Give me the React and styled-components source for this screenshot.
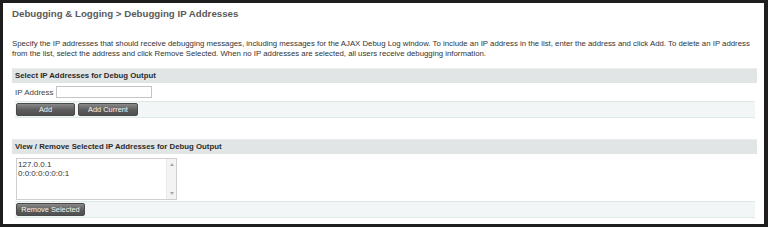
import React from 'react';
import styled, { createGlobalStyle } from 'styled-components';

const GlobalStyle = createGlobalStyle`
	html, body {
		margin: 0;
		padding: 0;
		background: #ffffff;
	}
	body {
		font-family: 'Liberation Sans', Arial, sans-serif;
		color: #333;
	}
`;

const Frame = styled.div`
	width: 768px;
	height: 227px;
	box-sizing: border-box;
	border: 3px solid #1e1e1e;
	border-right-width: 4px;
	padding: 4px 9px 0 9px;
	overflow: hidden;
	background: #fff;
`;

const Title = styled.h1`
	margin: 0;
	font-size: 9.7px;
	font-weight: bold;
	color: #5a5a5a;
	line-height: 14px;
`;

const Intro = styled.p`
	margin: 18px -6px 0 0;
	font-size: 7.8px;
	line-height: 10px;
	color: #333;
`;

const Section = styled.div`
	margin-top: ${({ gap }) => gap}px;
	width: 745px;
`;

const SectionHead = styled.div`
	height: 15px;
	background: #e1e5e5;
	border-top: 1px solid #e8eded;
	box-sizing: border-box;
	padding-left: 3px;
	font-size: 7.8px;
	font-weight: bold;
	line-height: 14px;
	color: #2b2b2b;
`;

const Body = styled.div`
	padding-left: 3px;
	width: 740px;
`;

const FieldRow = styled.div`
	display: flex;
	align-items: center;
	gap: 2px;
	height: 18px;
	font-size: 8px;
	color: #444;
`;

const TextInput = styled.input`
	width: 96px;
	height: 12px;
	box-sizing: border-box;
	border: 1px solid #c4c4c4;
	padding: 0 2px;
	font-size: 8px;
	outline: none;
`;

const ButtonBar = styled.div`
	display: flex;
	align-items: center;
	gap: 3px;
	height: 17px;
	box-sizing: border-box;
	background: #f2f6f6;
	border-top: 1px solid #dce9e9;
	border-bottom: 1px solid #dce9e9;
	padding-left: 1px;
`;

const Button = styled.button`
	width: ${({ w }) => w}px;
	height: 13px;
	padding: 0;
	border: 1px solid #4a4a4a;
	border-radius: 2px;
	background: linear-gradient(#8a8a8a, #5b5b5b 55%, #505050);
	color: #f4f4f4;
	font-family: 'Liberation Sans', Arial, sans-serif;
	font-size: 7.4px;
	line-height: 11px;
	text-align: center;
	cursor: pointer;
`;

const ListWrap = styled.div`
	display: flex;
	margin: 4px 0 1px 1px;
	width: 161px;
	height: 42px;
	box-sizing: border-box;
	border: 1px solid #cfcfcf;
	background: #fff;
`;

const ListItems = styled.div`
	flex: 1;
	padding: 1px 0 0 1px;
	font-size: 8px;
	line-height: 9px;
	color: #333;
`;

const Scrollbar = styled.div`
	width: 10px;
	display: flex;
	flex-direction: column;
	justify-content: space-between;
	align-items: center;
	background: #f3f3f3;
	border-left: 1px solid #ececec;
	padding: 4px 0;
	box-sizing: border-box;
`;

const Arrow = styled.div`
	width: 0;
	height: 0;
	border-left: 2.5px solid transparent;
	border-right: 2.5px solid transparent;
	${({ up }) =>
		up
			? 'border-bottom: 3px solid #a8a8a8;'
			: 'border-top: 3px solid #a8a8a8;'}
`;

const App = () => {
	return (
		<>
			<GlobalStyle />
			<Frame>
				<Title>Debugging &amp; Logging &gt; Debugging IP Addresses</Title>
				<Intro>
					Specify the IP addresses that should receive debugging messages, including messages for the AJAX Debug Log
					window. To include an IP address in the list, enter the address and click Add. To delete an IP address from the
					list, select the address and click Remove Selected. When no IP addresses are selected, all users receive
					debugging information.
				</Intro>

				<Section gap={9}>
					<SectionHead>Select IP Addresses for Debug Output</SectionHead>
					<Body>
						<FieldRow>
							IP Address
							<TextInput type="text" />
						</FieldRow>
						<ButtonBar>
							<Button w={59}>Add</Button>
							<Button w={60}>Add Current</Button>
						</ButtonBar>
					</Body>
				</Section>

				<Section gap={21}>
					<SectionHead>View / Remove Selected IP Addresses for Debug Output</SectionHead>
					<Body>
						<ListWrap>
							<ListItems>
								<div>127.0.0.1</div>
								<div>0:0:0:0:0:0:0:1</div>
							</ListItems>
							<Scrollbar>
								<Arrow up />
								<Arrow />
							</Scrollbar>
						</ListWrap>
						<ButtonBar>
							<Button w={69}>Remove Selected</Button>
						</ButtonBar>
					</Body>
				</Section>
			</Frame>
		</>
	);
};

export default App;
